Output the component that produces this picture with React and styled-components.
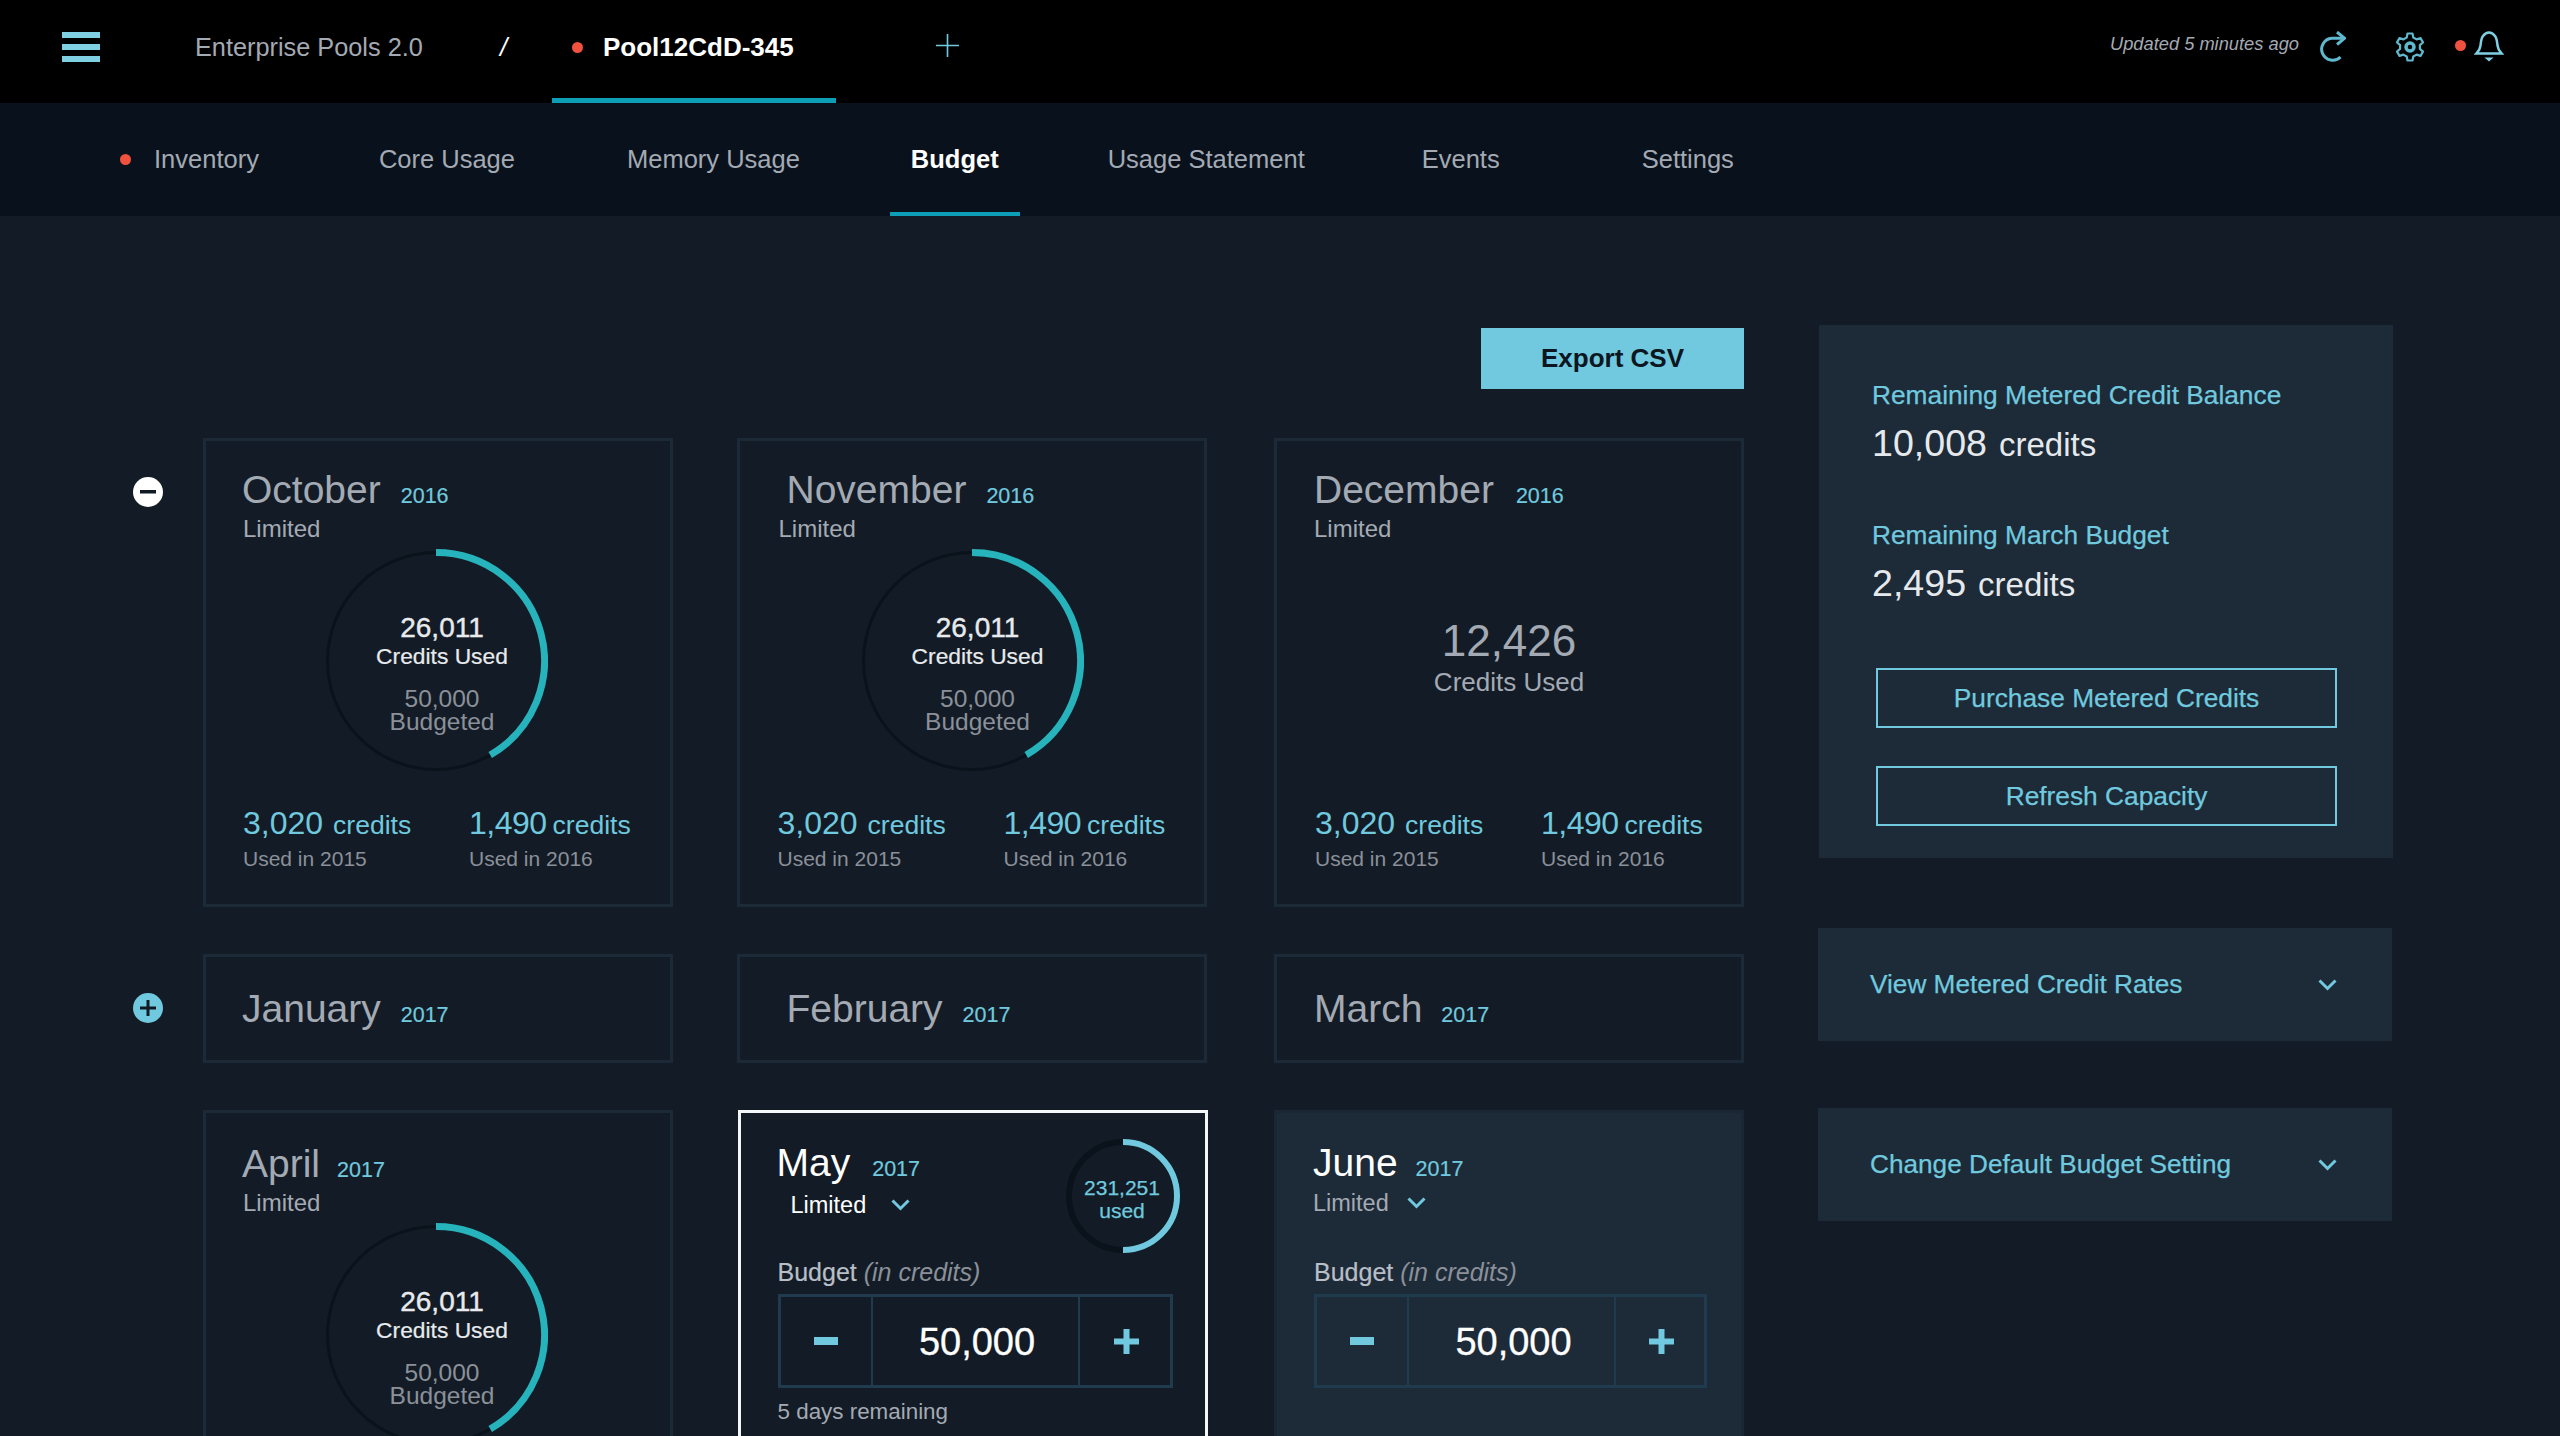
import React from 'react';
import styled, { createGlobalStyle } from 'styled-components';

const ACCENT = '#70c9de';
const GRAY = '#a4aab3';
const MUTED = '#8b9099';
const PANEL = '#1d2a38';

const GlobalStyle = createGlobalStyle`
  html, body {
    margin: 0;
    padding: 0;
    background: #131c26;
  }
  * {
    box-sizing: border-box;
  }
  body {
    font-family: "Liberation Sans", Arial, sans-serif;
  }
`;

const Page = styled.div`
  width: 2560px;
  height: 1436px;
  overflow: hidden;
  background: #131c26;
  color: #fff;
`;

const TopBar = styled.header`
  height: 103px;
  background: #000;
  display: flex;
  align-items: stretch;
  padding-left: 62px;
`;

const TopCenter = styled.div`
  display: flex;
  align-items: center;
  padding-bottom: 9px;
`;

const MenuButton = styled(TopCenter)`
  width: 38px;
  flex-direction: column;
  justify-content: center;
  gap: 6px;
  margin-right: 95px;

  span {
    width: 38px;
    height: 6px;
    background: #7fd0e2;
  }
`;

const Crumb = styled(TopCenter)`
  font-size: 25.3px;
  color: ${GRAY};
  width: 305px;
`;

const Slash = styled(TopCenter)`
  font-size: 26px;
  color: #fff;
  font-style: italic;
  width: 52px;
`;

const Dot = styled.span`
  width: 11px;
  height: 11px;
  border-radius: 50%;
  background: #f0523f;
  flex: none;
`;

const PoolTab = styled.div`
  width: 284px;
  display: flex;
  align-items: center;
  gap: 20px;
  padding: 0 0 4px 20px;
  border-bottom: 5px solid #0e9fb8;
  font-size: 26px;
  font-weight: 700;
`;

const AddTab = styled(TopCenter)`
  margin-left: 100px;
  padding-bottom: 12px;
`;

const TopRight = styled(TopCenter)`
  margin-left: auto;
  padding-right: 56px;
`;

const Updated = styled.span`
  font-size: 18.3px;
  font-style: italic;
  color: ${GRAY};
  margin: 0 17px 6px 0;
`;

const IconSlot = styled.span`
  display: flex;
  margin-left: ${p => p.$gap || 0}px;
`;

const AlertDot = styled(Dot)`
  margin: 0 8px 4px 30px;
`;

const SubNav = styled.nav`
  height: 113px;
  background: #09121c;
  display: flex;
  padding-left: 99px;
`;

const Tab = styled.div`
  display: flex;
  align-items: center;
  gap: 23px;
  padding: 0 21px;
  margin-left: ${p => p.$gap}px;
  font-size: 25.5px;
  color: ${p => (p.$active ? '#fff' : GRAY)};
  font-weight: ${p => (p.$active ? 700 : 400)};
  border-bottom: 4px solid ${p => (p.$active ? '#0e9fb8' : 'transparent')};
  border-top: 4px solid transparent;
`;

const Content = styled.main`
  display: flex;
  padding-left: 133px;
`;

const Budgets = styled.section`
  width: 1611px;
  padding-top: 112px;
`;

const ExportRow = styled.div`
  display: flex;
  justify-content: flex-end;
  margin-bottom: 49px;
`;

const ExportButton = styled.button`
  width: 263px;
  height: 61px;
  border: none;
  background: ${ACCENT};
  color: #0c1620;
  font: 700 26px "Liberation Sans", Arial, sans-serif;
`;

const YearRow = styled.div`
  display: flex;
  margin-bottom: 47px;
`;

const ToggleCol = styled.div`
  width: 70px;
  flex: none;
  padding-top: 39px;
`;

const Toggle = styled.span`
  display: flex;
  width: 30px;
  height: 30px;
  border-radius: 50%;
  background: ${p => (p.$open ? '#fff' : ACCENT)};
  align-items: center;
  justify-content: center;
  color: #111a24;
`;

const CardGrid = styled.div`
  display: grid;
  grid-template-columns: 534px 537px 470px;
`;

const Card = styled.article`
  width: 470px;
  border: 3px solid ${p => (p.$active ? '#f4f7f8' : p.$filled ? '#1a2633' : '#1c2937')};
  background: ${p => (p.$filled ? PANEL : 'transparent')};
  padding: 0 0 0 ${p => p.$inset || 37}px;
  height: ${p => (p.$short ? '109px' : '469px')};
`;

const EditCard = styled(Card)`
  padding: 26px 25px 0 ${p => p.$inset}px;
  margin-left: ${p => (p.$active ? 1 : 0)}px;
`;

const MonthLine = styled.div`
  display: flex;
  align-items: baseline;
  gap: ${p => p.$gap || 20}px;
  height: 44px;
  line-height: 44px;
  margin-top: ${p => p.$top || 27}px;
  margin-left: ${p => p.$indent || 0}px;
`;

const Month = styled.span`
  font-size: 39px;
  color: ${p => (p.$bright ? '#fff' : GRAY)};
`;

const Year = styled.span`
  font-size: 21.5px;
  color: ${ACCENT};
  -webkit-text-stroke: 0.2px ${ACCENT};
`;

const Plan = styled.div`
  font-size: 24px;
  line-height: 26px;
  margin-top: 4px;
  color: ${GRAY};
`;

const Ring = styled.div`
  display: grid;
  width: 224px;
  height: 224px;
  margin: 7px auto 0 81px;

  > * {
    grid-area: 1 / 1;
  }
`;

const RingText = styled.div`
  padding: 64px 0 0 12px;
  text-align: center;
`;

const UsedValue = styled.div`
  font-size: 28px;
  line-height: 30px;
  color: #e8eaec;
  -webkit-text-stroke: 0.4px #e8eaec;
`;

const UsedLabel = styled.div`
  font-size: 22.8px;
  line-height: 26px;
  color: #e8eaec;
  -webkit-text-stroke: 0.2px #e8eaec;
`;

const BudgetValue = styled.div`
  font-size: 24.5px;
  line-height: 23px;
  margin-top: 18px;
  color: ${MUTED};
`;

const BudgetLabel = styled.div`
  font-size: 24.5px;
  line-height: 23px;
  color: ${MUTED};
`;

const TotalBlock = styled.div`
  height: 224px;
  margin: 7px 0 0 -37px;
  padding-top: 68px;
  text-align: center;
  color: ${GRAY};
`;

const TotalValue = styled.div`
  font-size: 44px;
  line-height: 48px;
`;

const TotalLabel = styled.div`
  font-size: 26px;
  line-height: 30px;
  margin-top: 2px;
`;

const Stats = styled.div`
  display: grid;
  grid-template-columns: 226px auto;
  margin-top: 32px;
  margin-left: ${p => p.$indent || 0}px;
`;

const StatValue = styled.div`
  font-size: 26.5px;
  line-height: 36px;
  color: ${ACCENT};

  b {
    font-size: 32px;
    font-weight: 400;
    margin-right: ${p => (p.$tight ? 6 : 10)}px;
    letter-spacing: ${p => (p.$tight ? -0.5 : 0)}px;
  }
`;

const StatLabel = styled.div`
  font-size: 21px;
  line-height: 24px;
  margin-top: 4px;
  color: ${MUTED};
`;

const EditHead = styled.div`
  display: flex;
  justify-content: space-between;
  height: 112px;
`;

const EditMonth = styled(MonthLine)`
  margin: 2px 0 0 1px;
`;

const PlanSelect = styled.div`
  display: flex;
  align-items: center;
  gap: ${p => p.$gap}px;
  font-size: 23.5px;
  line-height: 26px;
  margin: ${p => p.$top}px 0 0 ${p => p.$left}px;
  color: ${p => (p.$bright ? '#fff' : GRAY)};
`;

const MiniRing = styled.div`
  display: grid;
  width: 114px;
  height: 114px;
  flex: none;

  > * {
    grid-area: 1 / 1;
  }
`;

const MiniText = styled.div`
  padding-top: 37px;
  text-align: center;
  font-size: 21px;
  line-height: 23px;
  color: ${ACCENT};
  margin-left: -2px;
  -webkit-text-stroke: 0.25px ${ACCENT};
`;

const BudgetHeading = styled.div`
  font-size: 25px;
  line-height: 28px;
  margin: 7px 0 0 2px;
  color: #b8bec6;
  -webkit-text-stroke: 0.2px #b8bec6;

  em {
    color: ${MUTED};
    -webkit-text-stroke: 0;
  }
`;

const Stepper = styled.div`
  display: grid;
  grid-template-columns: 90px 209px 1fr;
  width: ${p => p.$width}px;
  height: 94px;
  margin: 8px 0 0 2px;
  border: 3px solid #1f3b4d;
  align-items: stretch;
`;

const StepButton = styled.div`
  display: flex;
  align-items: center;
  justify-content: center;
  padding-left: ${p => p.$nudge || 0}px;
`;

const StepValue = styled.div`
  display: flex;
  align-items: center;
  justify-content: center;
  padding: 2px 0 0 4px;
  border-left: 2px solid #1f3b4d;
  border-right: 2px solid #1f3b4d;
  font-size: 38px;
  color: #fff;
  -webkit-text-stroke: 0.3px #fff;
`;

const Remaining = styled.div`
  font-size: 22.4px;
  line-height: 24px;
  margin: 12px 0 0 2px;
  color: ${GRAY};
`;

const Side = styled.aside`
  width: 574px;
  margin-left: 75px;
  padding-top: 109px;
`;

const BalancePanel = styled.div`
  height: 533px;
  background: ${PANEL};
  padding: 55px 56px 0 53px;
  margin-bottom: 70px;
`;

const BalanceLabel = styled.div`
  font-size: 26.3px;
  line-height: 30px;
  color: ${ACCENT};
  -webkit-text-stroke: 0.25px ${ACCENT};
`;

const BalanceValue = styled.div`
  font-size: 33px;
  line-height: 42px;
  margin: 12px 0 54px;
  color: #e6e9eb;

  b {
    font-size: 37.6px;
    font-weight: 400;
    margin-right: 12px;
  }
`;

const ButtonStack = styled.div`
  display: flex;
  flex-direction: column;
  gap: 38px;
  margin: 62px 0 0 4px;
`;

const OutlineButton = styled.button`
  width: 461px;
  height: 60px;
  background: transparent;
  border: 2px solid ${ACCENT};
  color: ${ACCENT};
  font: 26.3px "Liberation Sans", Arial, sans-serif;
  -webkit-text-stroke: 0.25px ${ACCENT};
`;

const Accordion = styled.div`
  height: 113px;
  margin: 0 1px 67px -1px;
  background: ${PANEL};
  display: flex;
  align-items: center;
  justify-content: space-between;
  padding: 0 55px 0 52px;
  font-size: 26.2px;
  color: ${ACCENT};
  -webkit-text-stroke: 0.25px ${ACCENT};
`;

const Plus = ({ size = 22, stroke = 2, color = ACCENT }) => (
  <svg width={size} height={size} viewBox={`0 0 ${size} ${size}`}>
    <path d={`M${size / 2} 0v${size}M0 ${size / 2}h${size}`} stroke={color} strokeWidth={stroke} fill="none" />
  </svg>
);

const Chevron = () => (
  <svg width="19" height="12" viewBox="0 0 19 12">
    <path d="M1.500 1.500 9.500 9.500l8-8" stroke={ACCENT} strokeWidth="3" fill="none" />
  </svg>
);

const RefreshIcon = () => (
  <svg width="30" height="32" viewBox="0 0 30 32" fill="none" stroke="#5fb8cd" strokeWidth="3">
    <path d="M27 7.300H15.700A11 11 0 1 0 24.500 26" />
    <path d="M21 1l7.500 6.300L21 13.500" />
  </svg>
);

const GearIcon = () => (
  <svg width="30" height="32" viewBox="0 0 30 30" fill="none" stroke="#5fb8cd" strokeWidth="2.200" strokeLinejoin="round">
    <path d="M12.500 1.500h5l.8 4 3.300 1.900 3.900-1.300 2.500 4.300-3.100 2.700v3.800l3.100 2.700-2.500 4.300-3.900-1.300-3.300 1.900-.8 4h-5l-.8-4-3.300-1.900-3.900 1.300L2 19.600l3.100-2.700v-3.800L2 10.400l2.500-4.300 3.900 1.300 3.300-1.900z" />
    <circle cx="15" cy="15" r="4" strokeWidth="3.500" />
  </svg>
);

const BellIcon = () => (
  <svg width="30" height="32" viewBox="0 0 30 32" fill="none" stroke="#7fd0e2" strokeWidth="2.500">
    <path d="M2.500 22.500h25c-2.500-2.500-3.500-4-4-8-.5-5-.6-7-2.500-9.500-1.500-2-3.500-3.500-6-3.500S10.500 3 9 5c-1.900 2.500-2 4.500-2.500 9.500-.5 4-1.500 5.500-4 8z" />
    <path d="M10.500 26.500h9L15 30.500z" fill="#7fd0e2" stroke="none" />
  </svg>
);

const Arc = ({ size, stroke, track, color, degrees }) => {
  const r = size / 2 - stroke / 2;
  const rad = (degrees - 90) * (Math.PI / 180);
  const c = size / 2;
  const x = c + r * Math.cos(rad);
  const y = c + r * Math.sin(rad);
  return (
    <svg width={size} height={size} viewBox={`0 0 ${size} ${size}`}>
      <circle cx={c} cy={c} r={r} fill="none" stroke="#0a121b" strokeWidth={track} />
      <path d={`M${c} ${c - r}A${r} ${r} 0 ${degrees > 180 ? 1 : 0} 1 ${x} ${y}`} fill="none" stroke={color} strokeWidth={stroke} />
    </svg>
  );
};

const UsageRing = () => (
  <Ring>
    <Arc size={224} stroke={7} track={3} color="#27b3bb" degrees={150} />
    <RingText>
      <UsedValue>26,011</UsedValue>
      <UsedLabel>Credits Used</UsedLabel>
      <BudgetValue>50,000</BudgetValue>
      <BudgetLabel>Budgeted</BudgetLabel>
    </RingText>
  </Ring>
);

const StatsRow = ({ indent }) => (
  <Stats $indent={indent}>
    <div>
      <StatValue><b>3,020</b>credits</StatValue>
      <StatLabel>Used in 2015</StatLabel>
    </div>
    <div>
      <StatValue $tight><b>1,490</b>credits</StatValue>
      <StatLabel>Used in 2016</StatLabel>
    </div>
  </Stats>
);

const BudgetStepper = ({ width }) => (
  <Stepper $width={width}>
    <StepButton>
      <svg width="24" height="8"><rect width="24" height="8" fill={ACCENT} /></svg>
    </StepButton>
    <StepValue>50,000</StepValue>
    <StepButton $nudge={3}><Plus size={25} stroke={6} /></StepButton>
  </Stepper>
);

const navTabs = [
  { label: 'Core Usage', gap: 78 },
  { label: 'Memory Usage', gap: 70 },
  { label: 'Budget', gap: 69, active: true },
  { label: 'Usage Statement', gap: 67 },
  { label: 'Events', gap: 75 },
  { label: 'Settings', gap: 100 },
];

export default function App() {
  return (
    <Page>
      <GlobalStyle />
      <TopBar>
        <MenuButton><span /><span /><span /></MenuButton>
        <Crumb>Enterprise Pools 2.0</Crumb>
        <Slash>/</Slash>
        <PoolTab><Dot />Pool12CdD-345</PoolTab>
        <AddTab><Plus size={23} stroke={1.600} /></AddTab>
        <TopRight>
          <Updated>Updated 5 minutes ago</Updated>
          <IconSlot><RefreshIcon /></IconSlot>
          <IconSlot $gap={49}><GearIcon /></IconSlot>
          <AlertDot />
          <IconSlot><BellIcon /></IconSlot>
        </TopRight>
      </TopBar>

      <SubNav>
        <Tab $gap={0}><Dot />Inventory</Tab>
        {navTabs.map(t => (
          <Tab key={t.label} $gap={t.gap} $active={t.active}>{t.label}</Tab>
        ))}
      </SubNav>

      <Content>
        <Budgets>
          <ExportRow><ExportButton>Export CSV</ExportButton></ExportRow>

          <YearRow>
            <ToggleCol>
              <Toggle $open>
                <svg width="16" height="4"><rect width="16" height="3.500" fill="#111a24" /></svg>
              </Toggle>
            </ToggleCol>
            <CardGrid>
              <Card>
                <MonthLine $indent={-1}><Month>October</Month><Year>2016</Year></MonthLine>
                <Plan>Limited</Plan>
                <UsageRing />
                <StatsRow />
              </Card>
              <Card $inset={38.5}>
                <MonthLine $indent={8}><Month>November</Month><Year>2016</Year></MonthLine>
                <Plan>Limited</Plan>
                <UsageRing />
                <StatsRow indent={-1} />
              </Card>
              <Card>
                <MonthLine $indent={0} $gap={22}><Month>December</Month><Year>2016</Year></MonthLine>
                <Plan>Limited</Plan>
                <TotalBlock>
                  <TotalValue>12,426</TotalValue>
                  <TotalLabel>Credits Used</TotalLabel>
                </TotalBlock>
                <StatsRow indent={1} />
              </Card>
            </CardGrid>
          </YearRow>

          <YearRow>
            <ToggleCol>
              <Toggle>
                <Plus size={16} stroke={3} color="#111a24" />
              </Toggle>
            </ToggleCol>
            <CardGrid>
              <Card $short><MonthLine $top={30} $indent={-1}><Month>January</Month><Year>2017</Year></MonthLine></Card>
              <Card $short $inset={38.5}><MonthLine $top={30} $indent={8}><Month>February</Month><Year>2017</Year></MonthLine></Card>
              <Card $short><MonthLine $top={30} $indent={0} $gap={19}><Month>March</Month><Year>2017</Year></MonthLine></Card>
            </CardGrid>
          </YearRow>

          <YearRow>
            <ToggleCol />
            <CardGrid>
              <Card>
                <MonthLine $top={29} $indent={-1} $gap={17}><Month>April</Month><Year>2017</Year></MonthLine>
                <Plan>Limited</Plan>
                <UsageRing />
              </Card>
              <EditCard $active $inset={34.5}>
                <EditHead>
                  <div>
                    <EditMonth $gap={22}><Month $bright>May</Month><Year>2017</Year></EditMonth>
                    <PlanSelect $top={7} $left={15} $gap={25} $bright>Limited<Chevron /></PlanSelect>
                  </div>
                  <MiniRing>
                    <Arc size={114} stroke={6} track={6} color={ACCENT} degrees={180} />
                    <MiniText>231,251<br />used</MiniText>
                  </MiniRing>
                </EditHead>
                <BudgetHeading>Budget <em>(in credits)</em></BudgetHeading>
                <BudgetStepper width={395} />
                <Remaining>5 days remaining</Remaining>
              </EditCard>
              <EditCard $filled $inset={35}>
                <EditHead>
                  <div>
                    <EditMonth $gap={18}><Month $bright>June</Month><Year>2017</Year></EditMonth>
                    <PlanSelect $top={5} $left={1} $gap={18}>Limited<Chevron /></PlanSelect>
                  </div>
                </EditHead>
                <BudgetHeading>Budget <em>(in credits)</em></BudgetHeading>
                <BudgetStepper width={393} />
              </EditCard>
            </CardGrid>
          </YearRow>
        </Budgets>

        <Side>
          <BalancePanel>
            <BalanceLabel>Remaining Metered Credit Balance</BalanceLabel>
            <BalanceValue><b>10,008</b>credits</BalanceValue>
            <BalanceLabel>Remaining March Budget</BalanceLabel>
            <BalanceValue><b>2,495</b>credits</BalanceValue>
            <ButtonStack>
              <OutlineButton>Purchase Metered Credits</OutlineButton>
              <OutlineButton>Refresh Capacity</OutlineButton>
            </ButtonStack>
          </BalancePanel>
          <Accordion>View Metered Credit Rates<Chevron /></Accordion>
          <Accordion>Change Default Budget Setting<Chevron /></Accordion>
        </Side>
      </Content>
    </Page>
  );
}
